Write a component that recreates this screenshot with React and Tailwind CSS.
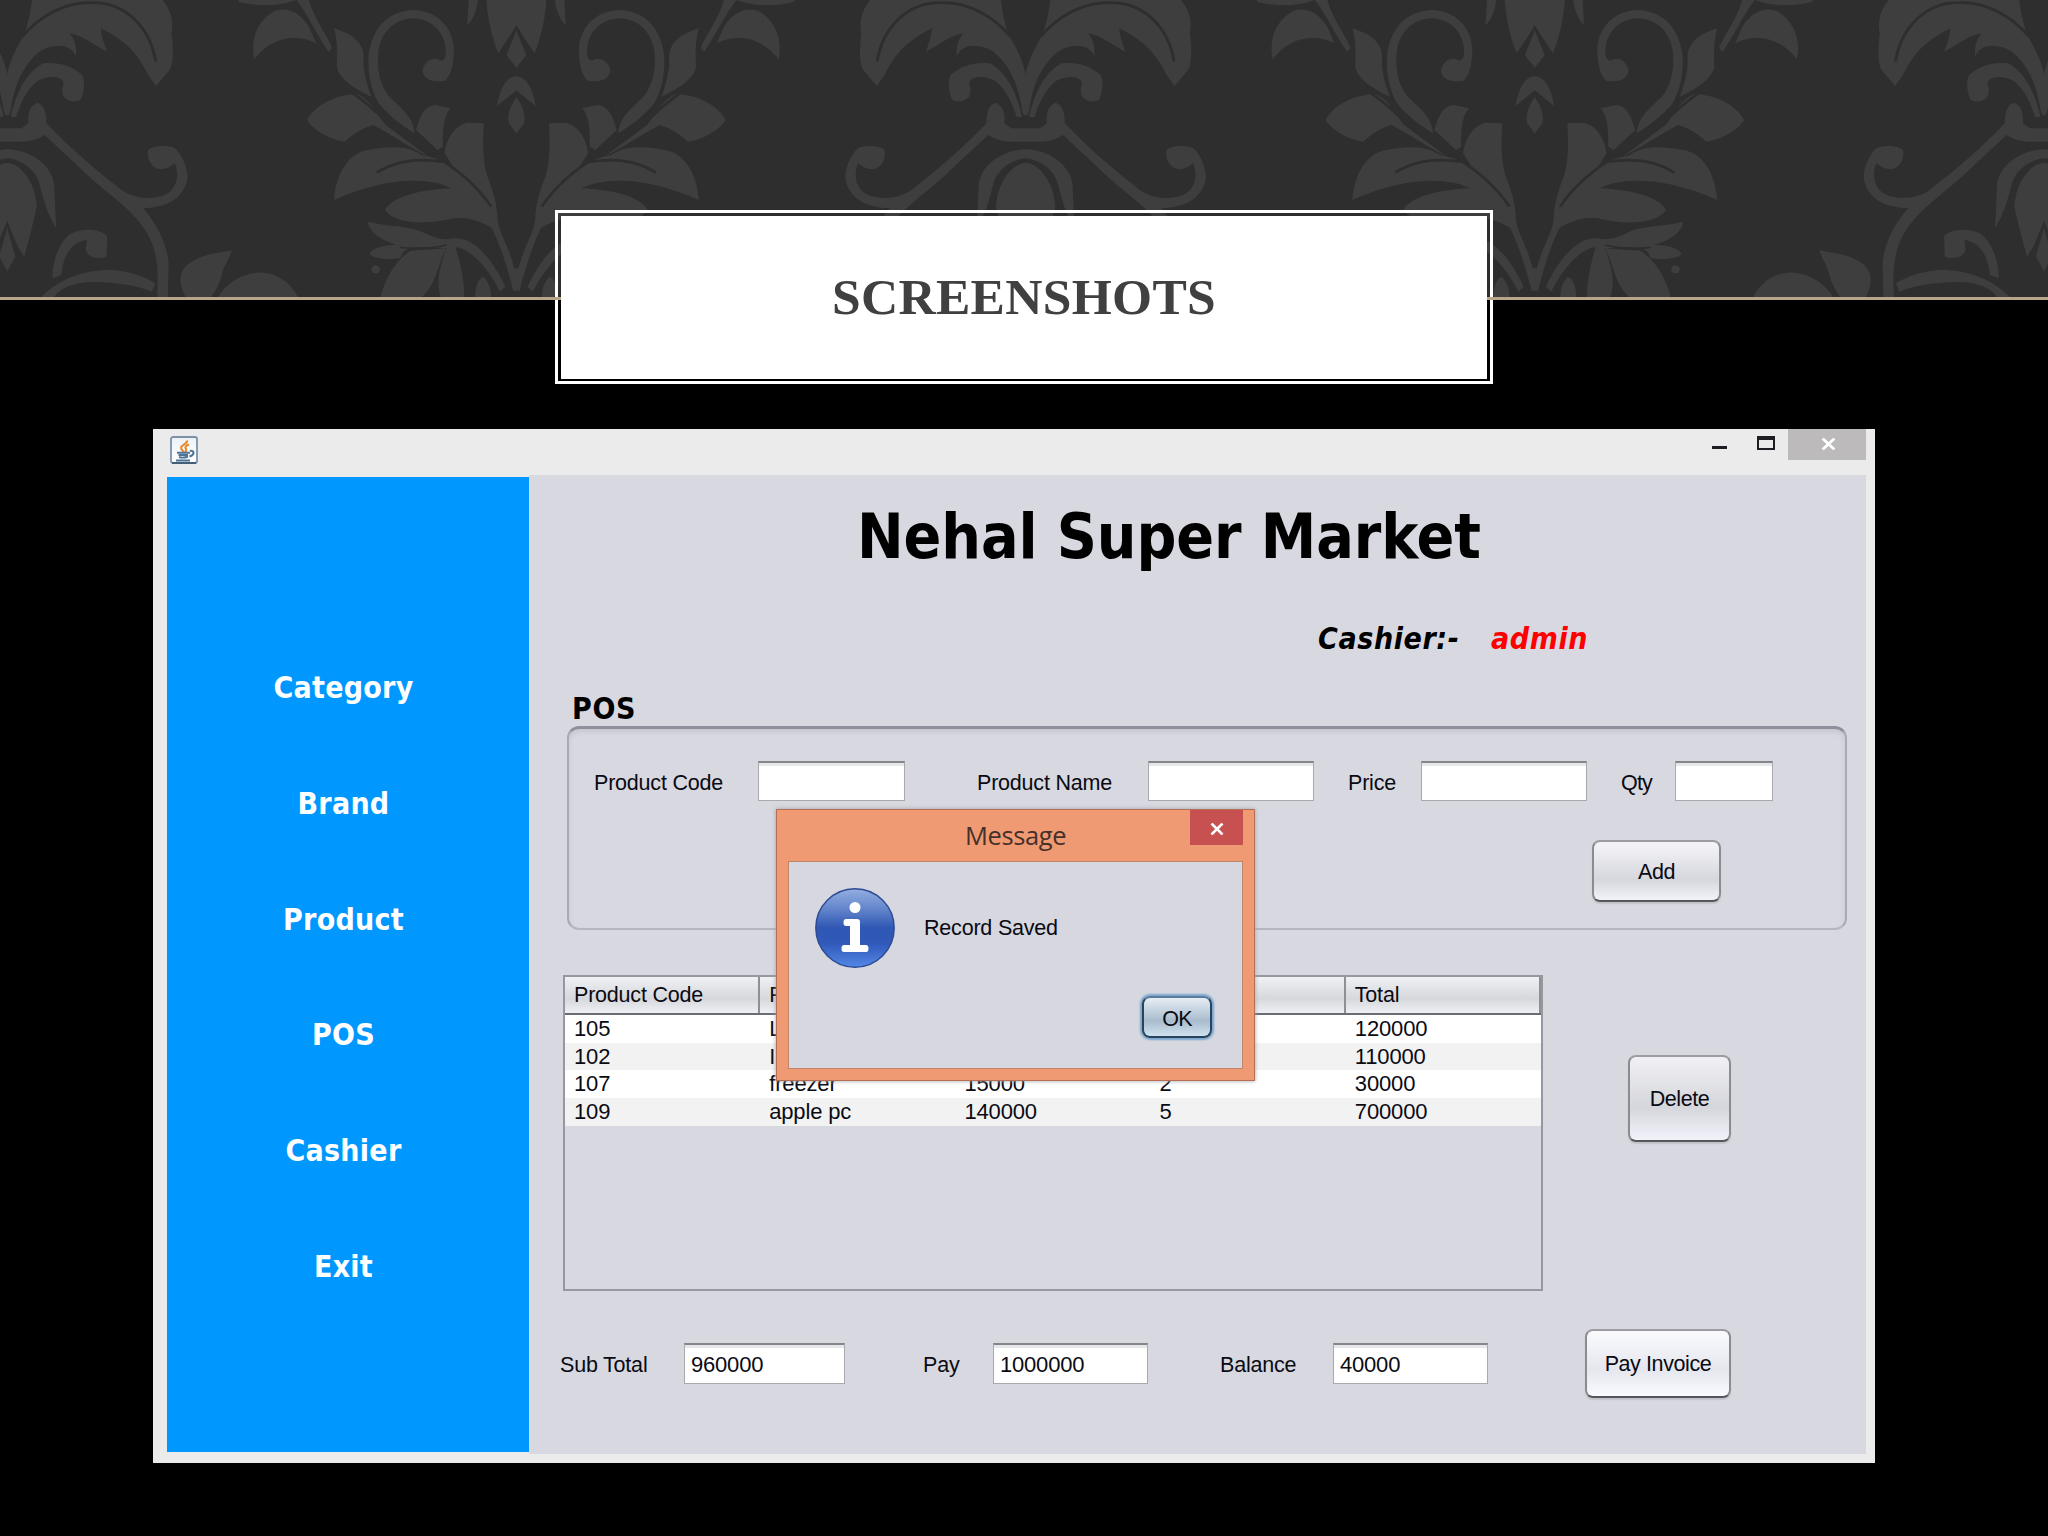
import clsx from 'clsx'

const MENU = ['Category', 'Brand', 'Product', 'POS', 'Cashier', 'Exit']

const COLUMNS = ['Product Code', 'P', '', '', 'Total']

const ROWS = [
  ['105', 'L', '', '', '120000'],
  ['102', 'I', '', '', '110000'],
  ['107', 'freezer', '15000', '2', '30000'],
  ['109', 'apple pc', '140000', '5', '700000'],
]

// x positions of the leaf motif, one repeat of the damask each
const REPEATS = [-502, 516.4, 1534.8]

function DamaskHalf() {
  return (
    <>
      <g fill="#3e3e3e">
        <path d="M90 0H455C475 25 488 60 480 100C486 150 486 190 475 210L437 258L415 225C385 160 350 120 282 85C285 110 290 130 300 155C260 135 240 110 195 100C210 120 215 140 213 168C195 130 150 130 110 155C60 200 40 260 30 330Q26 350 19 345V230C24 190 45 145 70 100Q84 50 90 0Z" />
        <path d="M30 350C50 260 80 215 120 190C160 185 200 195 230 225C240 250 235 280 225 300C210 308 190 305 178 290C170 270 178 255 178 245C170 230 140 225 110 240C80 260 60 300 45 352Z" />
        <path d="M19 385H60L80 370C75 340 85 315 105 308C125 315 130 340 130 370C200 450 280 520 340 570C380 600 440 600 470 580C500 555 500 520 490 490C480 495 470 508 450 508C425 505 410 480 415 450C430 435 470 435 490 445C515 470 530 520 523 545C510 590 480 620 400 625C440 670 470 740 472 790L470 892H440C445 800 440 740 400 680C360 620 300 580 250 530C200 480 150 430 125 405C90 430 50 425 19 425Z" />
        <path d="M19 448C90 450 150 500 152 560L155 640L158 685C130 640 120 590 110 550C100 510 60 478 19 475Z" />
        <path d="M19 488C60 490 100 550 103 620L90 680L68 770L50 740L19 660Z" />
        <path d="M19 680L43 770L19 815Z" />
        <path d="M147 835C145 780 170 720 200 700C240 680 290 690 300 710L298 770C270 780 245 770 240 750L243 720C200 725 175 770 172 825Z" />
        <path d="M115 892C180 820 280 800 350 815Q400 825 435 850L425 875C370 850 270 840 220 850Q170 862 150 892Z" />
        <path d="M520 892C495 840 505 810 530 790C570 760 610 760 650 750C640 780 625 800 620 830Q610 865 590 892Z" />
        <path d="M610 892C640 840 690 815 740 818C790 825 820 860 835 892Z" />
        <path d="M668 5C720 20 780 20 830 0H668Z" />
        <path d="M830 0H865C880 60 920 110 930 145L920 155C890 110 860 40 830 0Z" />
        <path d="M712 178C700 120 720 60 770 32C810 20 840 40 865 80L885 130C830 100 760 110 712 178Z" />
        <path d="M935 85C980 100 1010 120 1018 160V200Q1025 250 1040 290C1000 270 950 240 943 200C945 160 945 120 935 85Z" />
        <path d="M860 360C880 320 930 285 1000 282C1040 300 1060 350 1080 375L1200 470C1160 450 1090 400 1045 375C1010 385 980 410 965 425C930 420 880 395 860 360Z" />
        <path d="M1160 390C1155 350 1120 320 1090 290C1060 250 1055 200 1060 150C1070 90 1110 55 1160 55C1215 60 1245 100 1248 150C1250 175 1240 185 1230 180C1215 170 1190 180 1183 210C1185 235 1205 248 1245 243C1265 225 1270 190 1271 150C1270 80 1220 30 1155 30C1080 35 1040 90 1032 170C1030 230 1040 270 1060 310C1090 350 1130 380 1160 400Z" />
        <path d="M1165 390C1175 350 1190 315 1220 315L1262 325C1245 345 1240 370 1240 440L1225 450Z" />
        <path d="M1245 460C1250 420 1270 375 1310 368L1355 370C1352 420 1350 480 1365 530C1380 570 1395 620 1393 670C1410 720 1430 760 1440 805H1447V872H1437C1420 800 1400 730 1370 670Z" />
        <path d="M935 600C940 530 970 460 1030 450C1100 435 1150 440 1180 465L1240 480C1300 530 1350 580 1390 640L1400 700C1360 670 1320 650 1270 655C1220 670 1110 680 1078 630C1100 590 1170 570 1265 565C1200 530 1080 530 935 600Z" />
        <path d="M1030 665C1080 680 1150 675 1190 700C1230 720 1250 720 1270 715C1320 710 1370 760 1415 860L1400 875C1370 810 1320 745 1275 742C1290 790 1300 840 1300 892H1235C1220 850 1230 800 1250 745C1170 740 1150 740 1130 755L1120 775C1080 780 1040 775 1035 760C1050 740 1080 735 1110 735C1070 720 1035 700 1030 665Z" />
        <path d="M1065 892C1080 830 1110 780 1150 752L1250 745C1225 790 1225 850 1180 892Z" />
        <path d="M1330 892C1330 850 1345 830 1355 832Q1375 855 1375 892Z" />
        <circle cx="1052" cy="808" r="12" />
        <path d="M1362 0H1447V75L1420 120L1395 160C1380 120 1365 60 1362 0Z" />
        <path d="M1447 85L1418 165L1447 205Z" />
        <path d="M1447 228C1420 230 1400 260 1392 318L1447 270Z" />
        <path d="M1447 290C1425 320 1420 350 1425 370L1447 402Z" />
        <path d="M1312 0H1338C1335 30 1325 60 1308 75Z" />
      </g>
      <g fill="none" stroke="#2e2e2e" strokeWidth="8">
        <path d="M62 110C110 50 180 5 260 8C350 8 420 80 436 185" />
        <path d="M1055 518C1110 480 1180 475 1240 485" />
        <path d="M985 278C1060 330 1100 400 1220 470C1300 520 1350 580 1375 620" />
        <path d="M1120 742Q1190 750 1250 735" strokeWidth="5" />
        <path d="M1447 80L1412 168" strokeWidth="7" />
      </g>
    </>
  )
}

function Damask() {
  return (
    <svg className="block h-[297px] w-[2048px] bg-[#2e2e2e]" viewBox="0 0 2048 297">
      {REPEATS.map((x) => (
        <g key={x}>
          <g transform={`translate(${x - 516.4} 0) scale(0.35714 0.33333)`}>
            <DamaskHalf />
          </g>
          <g transform={`translate(${x + 516.4} 0) scale(-0.35714 0.33333)`}>
            <DamaskHalf />
          </g>
        </g>
      ))}
      {/* next repeat only shows its first few pixels */}
      <g transform="translate(2036.8 0) scale(0.35714 0.33333)">
        <DamaskHalf />
      </g>
    </svg>
  )
}

function JavaIcon() {
  return (
    <svg className="h-7 w-7" viewBox="0 0 28 28" fill="none">
      <defs>
        <linearGradient id="java-bg" x1="0" y1="0" x2="0" y2="1">
          <stop offset="0" stopColor="#eef1f4" />
          <stop offset="1" stopColor="#ffffff" />
        </linearGradient>
      </defs>
      <rect x="1" y="1" width="26" height="26" rx="2" fill="url(#java-bg)" stroke="#7b93aa" strokeWidth="1.8" />
      <path d="M2 27H26" stroke="#3f5972" strokeWidth="1.8" />
      <path d="M17 4.5C18 8 11 8.500 11 12C11 13.500 13 14.500 13.500 16M19 8.500C16 9.500 14.500 11 16 13C16.500 14 16 15 15 16" stroke="#e8892b" strokeWidth="2.1" />
      <path d="M7 16.800H20M8.500 19H18M9 21Q13 22.500 18 20.500M6 24.500H20" stroke="#4d7396" strokeWidth="1.9" />
      <path d="M20 15C24.500 14 25 18.500 19.500 20.500" stroke="#4d7396" strokeWidth="2" />
    </svg>
  )
}

function InfoIcon() {
  return (
    <svg className="h-20 w-20" viewBox="0 0 80 80">
      <defs>
        <linearGradient id="info-bg" x1="0" y1="0" x2="0" y2="1">
          <stop offset="0" stopColor="#93aee0" />
          <stop offset="0.25" stopColor="#6486cc" />
          <stop offset="0.5" stopColor="#2f57b3" />
          <stop offset="0.7" stopColor="#3059ba" />
          <stop offset="1" stopColor="#5488e6" />
        </linearGradient>
      </defs>
      <circle cx="40" cy="40" r="39.200" fill="url(#info-bg)" stroke="#2c4a94" strokeWidth="1.4" />
      <circle cx="40" cy="19.500" r="5.500" fill="#fff" />
      <path d="M31 31H42Q45 31 45 34V57H51Q53.500 57 53.500 60.500T51 64H29Q26.500 64 26.500 60.500T29 57H35V38H31Q28.500 38 28.500 34.500T31 31Z" fill="#fff" />
    </svg>
  )
}

function Cross({ className }) {
  return (
    <svg className={className} viewBox="0 0 14 12" preserveAspectRatio="none">
      <path d="M1.500 0.500L12.500 11.500M12.500 0.500L1.500 11.500" stroke="#fff" strokeWidth="2.6" />
    </svg>
  )
}

function Field({ value, className }) {
  return (
    <div
      className={clsx(
        'flex shrink-0 items-center border border-t-2 border-[#a9aab0] border-t-[#85868c] bg-white pl-1.5 text-[22px] shadow-[inset_0_3px_1px_#e6e7e9]',
        className,
      )}
    >
      {value}
    </div>
  )
}

function Button({ children, className }) {
  return (
    <div
      className={clsx(
        'flex shrink-0 items-center justify-center rounded-lg border-2 border-[#8b8c91] border-t-[#9c9da2] border-b-[#55565b] pt-0.5 text-[21.5px] tracking-[-0.400px] shadow-[0_2px_1px_#c3c4cb]',
        className,
      )}
    >
      {children}
    </div>
  )
}

function Sidebar() {
  return (
    <nav className="ml-3.5 mt-0.5 flex h-[975px] w-[362px] shrink-0 flex-col items-center bg-[#0098ff] pr-[9px] pt-[191px] font-['DejaVu_Sans_Condensed','DejaVu_Sans',sans-serif] text-[30px] font-bold leading-[116px] tracking-[0.250px] text-white [font-stretch:condensed]">
      {MENU.map((item) => (
        <div key={item} className="h-[115.800px] -translate-y-[38px]">
          {item}
        </div>
      ))}
    </nav>
  )
}

function ProductForm() {
  return (
    <section className="ml-[38px] h-[204px] w-[1280px] rounded-[12px] border-2 border-[#a9aab4] border-t-[3px] border-t-[#8f909b] border-b-[#b5b6bf] pt-8 shadow-[inset_0_3px_5px_#c6c7d0]">
      <div className="flex h-10 items-center">
        <span className="ml-[25px] w-[164px] pt-1">Product Code</span>
        <Field className="h-10 w-[147px]" />
        <span className="ml-[72px] w-[171px] pt-1">Product Name</span>
        <Field className="h-10 w-[166px]" />
        <span className="ml-[34px] w-[73px] pt-1">Price</span>
        <Field className="h-10 w-[166px]" />
        <span className="ml-[34px] w-[54px] pt-1 tracking-[-0.800px]">Qty</span>
        <Field className="h-10 w-[98px]" />
      </div>
      <Button className="ml-[1023px] mt-[39px] h-[62px] w-[129px] bg-linear-to-b from-[#f5f5f9] via-[#d6d7dd] via-65% to-[#f2f2fa]">
        Add
      </Button>
    </section>
  )
}

function ItemsTable() {
  return (
    <div className="h-[316px] w-[980px] shrink-0 border-2 border-[#9697a0]">
      <div className="flex h-[38px] border-b-2 border-[#6c6d74] bg-linear-to-b from-[#f0f1f4] via-[#d7d8dc] via-60% to-[#eff0f5]">
        {COLUMNS.map((col, i) => (
          <div key={i} className="w-[195.400px] border-r-2 border-[#8f9097] pl-[9px] pt-px leading-[35px]">
            {col}
          </div>
        ))}
      </div>
      {ROWS.map((row) => (
        <div key={row[0]} className="flex h-[27.700px] text-[22px] leading-[28px] tracking-[-0.150px] even:bg-white odd:bg-[#f2f2f3]">
          {row.map((cell, i) => (
            <div key={i} className="w-[195.400px] pl-[9px]">
              {cell}
            </div>
          ))}
        </div>
      ))}
    </div>
  )
}

function MessageDialog() {
  return (
    <div className="absolute left-[623px] top-[380px] h-[272px] w-[479px] border border-[#b56f55] bg-[#f09a74] shadow-[0_0_4px_#9fa0a8]">
      <div className="flex h-[51px]">
        <div className="ml-[188px] mt-[5px] w-[225px] font-['Open_Sans',sans-serif] text-[25.500px] leading-[40px] tracking-[-0.400px] text-[#46302a]">
          Message
        </div>
        <div className="flex h-[35px] w-[53px] items-center justify-center bg-[#c75050] pt-0.5">
          <Cross className="h-3 w-3.5" />
        </div>
      </div>
      <div className="ml-[11px] h-[208px] w-[455px] border border-[#c28468] bg-[#d7d8df] pl-[26px] pt-[26px]">
        <div className="flex items-center">
          <InfoIcon />
          <span className="ml-[29px]">Record Saved</span>
        </div>
        <div className="ml-[327px] mt-[28px] flex h-[42px] w-[70px] items-center justify-center rounded-lg border-2 border-[#27445c] border-t-[#5a7c99] bg-linear-to-b from-[#e6eef5] via-[#a9bccd] via-60% to-[#cfe2f2] pt-1 tracking-[-0.800px] shadow-[0_0_2px_2px_#79a5d0]">
          OK
        </div>
      </div>
    </div>
  )
}

function PosWindow() {
  return (
    <main className="relative ml-[153px] mt-[129px] h-[1034px] w-[1722px] bg-[#ebebec] font-['Liberation_Sans',Arial,sans-serif] text-[21.500px] tracking-[-0.200px] text-[#0a0a12]">
      <div className="flex h-[46px] items-start">
        <div className="ml-[17px] mt-[7px]">
          <JavaIcon />
        </div>
        <div className="ml-[1514px] mt-[17px] h-[3px] w-[15px] bg-[#1d1d24]" />
        <div className="ml-[30px] mt-[7px] h-3.5 w-[18px] border-2 border-t-4 border-[#1d1d24]" />
        <div className="ml-[13px] flex h-[31px] w-[78px] items-center justify-center bg-[#bcbabb] pb-0.5 pl-0.5">
          <Cross className="h-3 w-[15px]" />
        </div>
      </div>
      <div className="flex">
        <Sidebar />
        <div className="flex h-[979px] w-[1337px] flex-col bg-[#d7d8e0]">
          <h2 className="ml-[328px] mt-[26px] font-['DejaVu_Sans_Condensed','DejaVu_Sans',sans-serif] text-[62px] font-bold leading-[72px] text-black tracking-[-0.100px] [font-stretch:condensed]">
            Nehal Super Market
          </h2>
          <div className="ml-[789px] mt-[48px] flex h-9 font-['DejaVu_Sans_Condensed','DejaVu_Sans',sans-serif] text-[30px] font-bold italic leading-9 tracking-[0.600px] text-black [font-stretch:condensed]">
            <span className="w-[173px]">Cashier:-</span>
            <span className="text-[#ff0000]">admin</span>
          </div>
          <h3 className="ml-[43px] mt-[34px] h-[35px] font-['DejaVu_Sans_Condensed','DejaVu_Sans',sans-serif] text-[30px] font-bold leading-9 tracking-[0.600px] text-black [font-stretch:condensed]">
            POS
          </h3>
          <ProductForm />
          <div className="ml-[34px] mt-[45px] flex">
            <ItemsTable />
            <Button className="ml-[85px] mt-[80px] h-[87px] w-[103px] bg-linear-to-b from-[#f1f1f5] via-[#d5d6db] via-60% to-[#f2f2fb]">
              Delete
            </Button>
          </div>
          <div className="ml-[31px] mt-[37px] flex h-[71px] items-center">
            <span className="w-[124px] pt-[3px]">Sub Total</span>
            <Field className="h-[41px] w-[161px]" value="960000" />
            <span className="ml-[78px] w-[70px] pt-[3px]">Pay</span>
            <Field className="h-[41px] w-[155px]" value="1000000" />
            <span className="ml-[72px] w-[113px] pt-[3px]">Balance</span>
            <Field className="h-[41px] w-[155px]" value="40000" />
            <Button className="ml-[97px] h-[69px] w-[146px] bg-linear-to-b from-[#fafafd] via-[#e5e7ee] via-60% to-[#fafaff]">
              Pay Invoice
            </Button>
          </div>
        </div>
      </div>
      <MessageDialog />
    </main>
  )
}

export default function App() {
  return (
    <div className="relative h-[1536px] w-[2048px] overflow-hidden bg-black">
      <header>
        <Damask />
        <div className="absolute left-[554.500px] top-[210px] h-[174px] w-[938.500px] border-[3.500px] border-white" />
        <div className="relative h-[3px] bg-[#b8a68b]" />
        <div className="absolute left-[561px] top-[216px] flex h-[163px] w-[926px] items-center justify-center bg-white pb-0.5">
          <h1 className="font-['Liberation_Serif',serif] text-[51.500px] font-bold leading-none tracking-[0.300px] text-[#404040]">
            SCREENSHOTS
          </h1>
        </div>
      </header>
      <PosWindow />
    </div>
  )
}
